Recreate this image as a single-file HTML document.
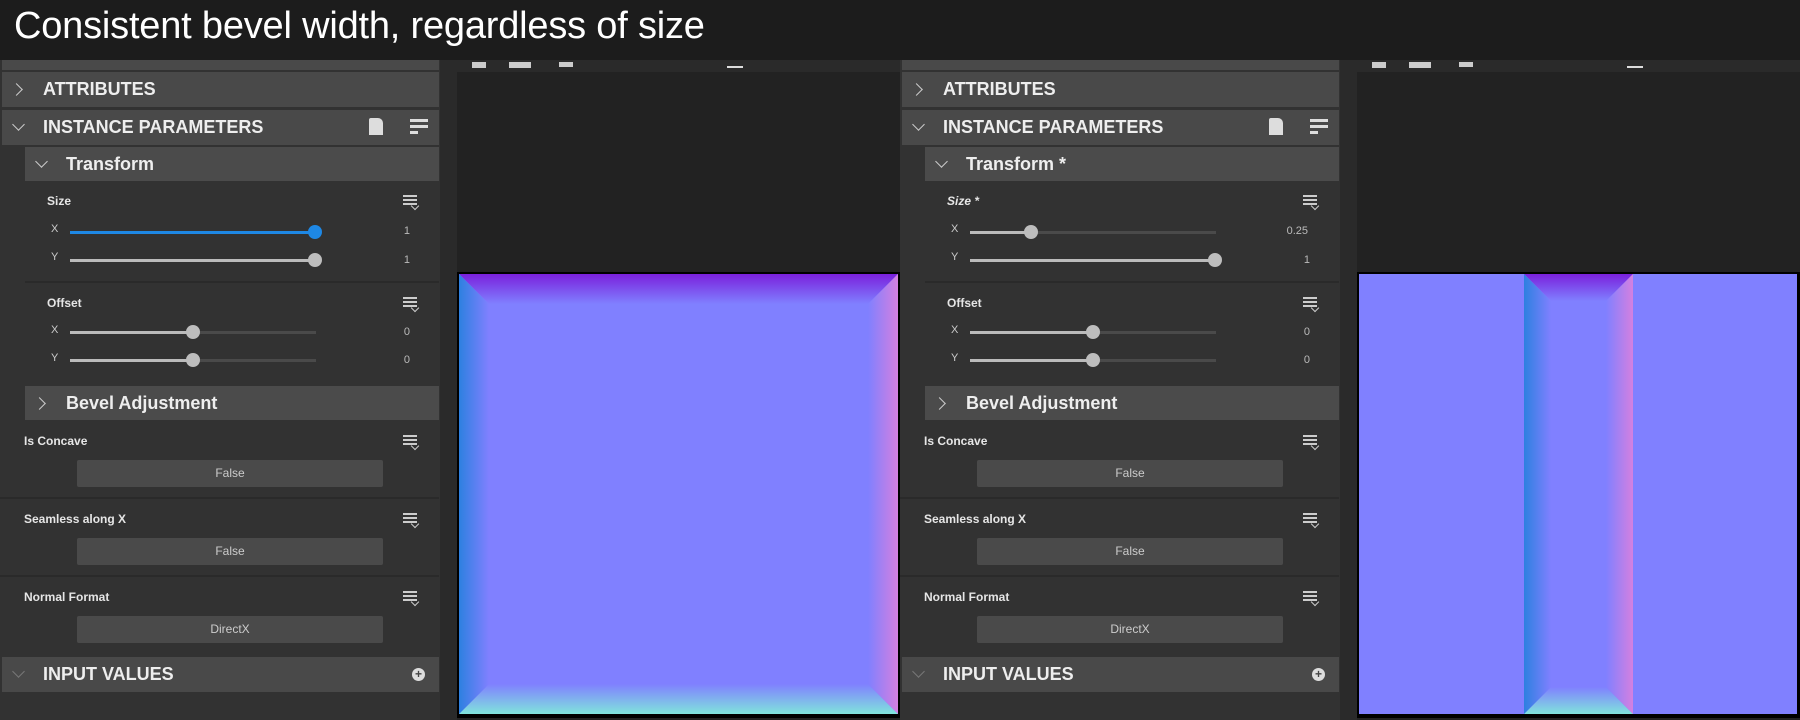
<!DOCTYPE html>
<html><head><meta charset="utf-8"><style>
*{margin:0;padding:0;box-sizing:border-box}
body{width:1800px;height:720px;background:#2b2b2b;position:relative;overflow:hidden;font-family:"Liberation Sans",sans-serif;color:#eee}
.a{position:absolute}
.title{left:0;top:0;width:1800px;height:60px;background:#1c1c1c;font-size:38px;color:#fff;padding:5px 0 0 14px;letter-spacing:-0.2px}
.panel{top:60px;width:440px;height:660px;background:#323232}
.hdr{background:#494949;height:35px;font-weight:bold;font-size:18px;color:#eee;line-height:35px}
.sub{background:#4b4b4b;height:34px;font-weight:bold;font-size:18px;line-height:34px}
.lbl{font-size:12px;font-weight:bold;color:#e6e6e6}
.ax{font-size:11px;color:#ccc}
.val{font-size:11px;color:#bbb;text-align:right;width:60px}
.track{height:3px;background:#4a4a4a;width:246px;left:70px}
.fill{height:3px;background:#bbb;left:0;top:0}
.thumb{width:14px;height:14px;border-radius:50%;background:#bdbdbd;top:-6px}
.btn{left:77px;width:306px;height:27px;background:#4a4a4a;border-radius:2px;font-size:12px;color:#ccc;text-align:center;line-height:27px}
.sep{height:2px;background:#2a2a2a}
.cd{width:9px;height:9px;border-right:1.5px solid #ccc;border-bottom:1.5px solid #ccc;transform:rotate(45deg)}
.cr{width:9px;height:9px;border-right:1.5px solid #ccc;border-bottom:1.5px solid #ccc;transform:rotate(-45deg)}
.mi{width:14px;height:2px;background:#ccc;box-shadow:0 4px 0 #ccc,0 8px 0 #ccc}
.mi::after{content:"";position:absolute;left:9px;top:8px;width:5px;height:5px;border-right:1.5px solid #ccc;border-bottom:1.5px solid #ccc;transform:rotate(45deg)}
.vp{top:60px;width:444px;height:660px;background:#222}
</style></head><body>
<div class="a title">Consistent bevel width, regardless of size</div>

<div class="a" style="left:440px;top:60px;width:17px;height:660px;background:#2a2a2a"></div>
<div class="a" style="left:1340px;top:60px;width:17px;height:660px;background:#2a2a2a"></div>

<div class="a vp" style="left:457px">
  <div class="a" style="left:0;top:0;width:444px;height:12px;background:#2a2a2a"></div>
  <div class="a" style="left:15px;top:2px;width:14px;height:6px;background:#ccc"></div>
  <div class="a" style="left:52px;top:2px;width:22px;height:6px;background:#ccc"></div>
  <div class="a" style="left:102px;top:2px;width:14px;height:5px;background:#ccc"></div>
  <div class="a" style="left:270px;top:1px;width:16px;height:7px;border-bottom:2px solid #ddd"></div>
  <div class="a" style="left:0;top:212px;width:444px;height:446px;background:#000"></div>
  <svg class="a" style="left:2px;top:214px" width="439" height="440" viewBox="0 0 439 440">
    <defs>
      <linearGradient id="gt" x1="0" y1="0" x2="0" y2="1"><stop offset="0" stop-color="#7a20dc"/><stop offset="1" stop-color="#8080ff"/></linearGradient>
      <linearGradient id="gb" x1="0" y1="1" x2="0" y2="0"><stop offset="0" stop-color="#80e4dc"/><stop offset="1" stop-color="#8080ff"/></linearGradient>
      <linearGradient id="gl" x1="0" y1="0" x2="1" y2="0"><stop offset="0" stop-color="#2d80e0"/><stop offset="1" stop-color="#8080ff"/></linearGradient>
      <linearGradient id="gr" x1="1" y1="0" x2="0" y2="0"><stop offset="0" stop-color="#d480e0"/><stop offset="1" stop-color="#8080ff"/></linearGradient>
    </defs>
    <rect width="439" height="440" fill="#8080ff"/>
    <polygon points="0,0 439,0 409,30 30,30" fill="url(#gt)"/>
    <polygon points="0,440 439,440 409,410 30,410" fill="url(#gb)"/>
    <polygon points="0,0 30,30 30,410 0,440" fill="url(#gl)"/>
    <polygon points="439,0 409,30 409,410 439,440" fill="url(#gr)"/>
  </svg>
</div>
<div class="a vp" style="left:1357px;width:443px">
  <div class="a" style="left:0;top:0;width:443px;height:12px;background:#2a2a2a"></div>
  <div class="a" style="left:15px;top:2px;width:14px;height:6px;background:#ccc"></div>
  <div class="a" style="left:52px;top:2px;width:22px;height:6px;background:#ccc"></div>
  <div class="a" style="left:102px;top:2px;width:14px;height:5px;background:#ccc"></div>
  <div class="a" style="left:270px;top:1px;width:16px;height:7px;border-bottom:2px solid #ddd"></div>
  <div class="a" style="left:0;top:212px;width:443px;height:446px;background:#000"></div>
  <svg class="a" style="left:2px;top:214px" width="438" height="440" viewBox="0 0 438 440">
    <rect width="438" height="440" fill="#8080ff"/>
    <g transform="translate(165,0)">
    <polygon points="0,0 109,0 82,27 27,27" fill="url(#gt)"/>
    <polygon points="0,440 109,440 82,413 27,413" fill="url(#gb)"/>
    <polygon points="0,0 27,27 27,413 0,440" fill="url(#gl)"/>
    <polygon points="109,0 82,27 82,413 109,440" fill="url(#gr)"/>
    </g>
  </svg>
</div>

<div class="a panel" style="left:0">
  <div class="a" style="left:2px;top:0;width:437px;height:10px;background:#494949"></div>
  <div class="a hdr" style="left:2px;top:12px;width:437px"><div class="a cr" style="left:10px;top:13px"></div><span class="a" style="left:41px">ATTRIBUTES</span></div>
  <div class="a hdr" style="left:2px;top:50px;width:437px"><div class="a cd" style="left:12px;top:10px"></div><span class="a" style="left:41px">INSTANCE PARAMETERS</span>
    <div class="a" style="left:367px;top:8px;width:14px;height:17px;background:#ddd;border-radius:2px 5px 0 0"></div>
    <div class="a" style="left:408px;top:9px;width:18px;height:3px;background:#ddd"></div>
    <div class="a" style="left:408px;top:15px;width:18px;height:3px;background:#ddd"></div>
    <div class="a" style="left:408px;top:21px;width:8px;height:3px;background:#ddd"></div>
  </div>
  <div class="a sub" style="left:25px;top:87px;width:414px"><div class="a cd" style="left:12px;top:10px"></div><span class="a" style="left:41px">Transform</span></div>
  <div class="a lbl" style="left:47px;top:134px">Size</div>
  <div class="a mi" style="left:403px;top:135px"></div>
  <div class="a ax" style="left:51px;top:163px">X</div>
  <div class="a track" style="top:171px"><div class="a fill" style="width:246px;background:#1e88e5"></div><div class="a thumb" style="left:238px;background:#1e88e5"></div></div>
  <div class="a val" style="left:350px;top:165px">1</div>
  <div class="a ax" style="left:51px;top:191px">Y</div>
  <div class="a track" style="top:199px"><div class="a fill" style="width:246px"></div><div class="a thumb" style="left:238px"></div></div>
  <div class="a val" style="left:350px;top:194px">1</div>
  <div class="a sep" style="left:25px;top:221px;width:414px"></div>
  <div class="a lbl" style="left:47px;top:236px">Offset</div>
  <div class="a mi" style="left:403px;top:237px"></div>
  <div class="a ax" style="left:51px;top:264px">X</div>
  <div class="a track" style="top:271px"><div class="a fill" style="width:123px"></div><div class="a thumb" style="left:116px"></div></div>
  <div class="a val" style="left:350px;top:266px">0</div>
  <div class="a ax" style="left:51px;top:292px">Y</div>
  <div class="a track" style="top:299px"><div class="a fill" style="width:123px"></div><div class="a thumb" style="left:116px"></div></div>
  <div class="a val" style="left:350px;top:294px">0</div>
  <div class="a sub" style="left:25px;top:326px;width:414px"><div class="a cr" style="left:10px;top:13px"></div><span class="a" style="left:41px">Bevel Adjustment</span></div>
  <div class="a lbl" style="left:24px;top:374px">Is Concave</div>
  <div class="a mi" style="left:403px;top:375px"></div>
  <div class="a btn" style="top:400px">False</div>
  <div class="a sep" style="left:0;top:437px;width:439px"></div>
  <div class="a lbl" style="left:24px;top:452px">Seamless along X</div>
  <div class="a mi" style="left:403px;top:453px"></div>
  <div class="a btn" style="top:478px">False</div>
  <div class="a sep" style="left:0;top:515px;width:439px"></div>
  <div class="a lbl" style="left:24px;top:530px">Normal Format</div>
  <div class="a mi" style="left:403px;top:531px"></div>
  <div class="a btn" style="top:556px">DirectX</div>
  <div class="a hdr" style="left:2px;top:597px;width:437px"><div class="a cd" style="left:12px;top:10px;border-color:#777"></div><span class="a" style="left:41px">INPUT VALUES</span>
    <div class="a" style="left:410px;top:11px;width:13px;height:13px;border-radius:50%;background:#ddd;color:#444;font-size:12px;line-height:13px;text-align:center;font-weight:bold">+</div></div>
</div>

<div class="a panel" style="left:900px">
  <div class="a" style="left:2px;top:0;width:437px;height:10px;background:#494949"></div>
  <div class="a hdr" style="left:2px;top:12px;width:437px"><div class="a cr" style="left:10px;top:13px"></div><span class="a" style="left:41px">ATTRIBUTES</span></div>
  <div class="a hdr" style="left:2px;top:50px;width:437px"><div class="a cd" style="left:12px;top:10px"></div><span class="a" style="left:41px">INSTANCE PARAMETERS</span>
    <div class="a" style="left:367px;top:8px;width:14px;height:17px;background:#ddd;border-radius:2px 5px 0 0"></div>
    <div class="a" style="left:408px;top:9px;width:18px;height:3px;background:#ddd"></div>
    <div class="a" style="left:408px;top:15px;width:18px;height:3px;background:#ddd"></div>
    <div class="a" style="left:408px;top:21px;width:8px;height:3px;background:#ddd"></div>
  </div>
  <div class="a sub" style="left:25px;top:87px;width:414px"><div class="a cd" style="left:12px;top:10px"></div><span class="a" style="left:41px">Transform *</span></div>
  <div class="a lbl" style="left:47px;top:134px;font-style:italic">Size *</div>
  <div class="a mi" style="left:403px;top:135px"></div>
  <div class="a ax" style="left:51px;top:163px">X</div>
  <div class="a track" style="top:171px"><div class="a fill" style="width:62px"></div><div class="a thumb" style="left:54px"></div></div>
  <div class="a val" style="left:348px;top:165px">0.25</div>
  <div class="a ax" style="left:51px;top:191px">Y</div>
  <div class="a track" style="top:199px"><div class="a fill" style="width:246px"></div><div class="a thumb" style="left:238px"></div></div>
  <div class="a val" style="left:350px;top:194px">1</div>
  <div class="a sep" style="left:25px;top:221px;width:414px"></div>
  <div class="a lbl" style="left:47px;top:236px">Offset</div>
  <div class="a mi" style="left:403px;top:237px"></div>
  <div class="a ax" style="left:51px;top:264px">X</div>
  <div class="a track" style="top:271px"><div class="a fill" style="width:123px"></div><div class="a thumb" style="left:116px"></div></div>
  <div class="a val" style="left:350px;top:266px">0</div>
  <div class="a ax" style="left:51px;top:292px">Y</div>
  <div class="a track" style="top:299px"><div class="a fill" style="width:123px"></div><div class="a thumb" style="left:116px"></div></div>
  <div class="a val" style="left:350px;top:294px">0</div>
  <div class="a sub" style="left:25px;top:326px;width:414px"><div class="a cr" style="left:10px;top:13px"></div><span class="a" style="left:41px">Bevel Adjustment</span></div>
  <div class="a lbl" style="left:24px;top:374px">Is Concave</div>
  <div class="a mi" style="left:403px;top:375px"></div>
  <div class="a btn" style="top:400px">False</div>
  <div class="a sep" style="left:0;top:437px;width:439px"></div>
  <div class="a lbl" style="left:24px;top:452px">Seamless along X</div>
  <div class="a mi" style="left:403px;top:453px"></div>
  <div class="a btn" style="top:478px">False</div>
  <div class="a sep" style="left:0;top:515px;width:439px"></div>
  <div class="a lbl" style="left:24px;top:530px">Normal Format</div>
  <div class="a mi" style="left:403px;top:531px"></div>
  <div class="a btn" style="top:556px">DirectX</div>
  <div class="a hdr" style="left:2px;top:597px;width:437px"><div class="a cd" style="left:12px;top:10px;border-color:#777"></div><span class="a" style="left:41px">INPUT VALUES</span>
    <div class="a" style="left:410px;top:11px;width:13px;height:13px;border-radius:50%;background:#ddd;color:#444;font-size:12px;line-height:13px;text-align:center;font-weight:bold">+</div></div>
</div>
</body></html>
